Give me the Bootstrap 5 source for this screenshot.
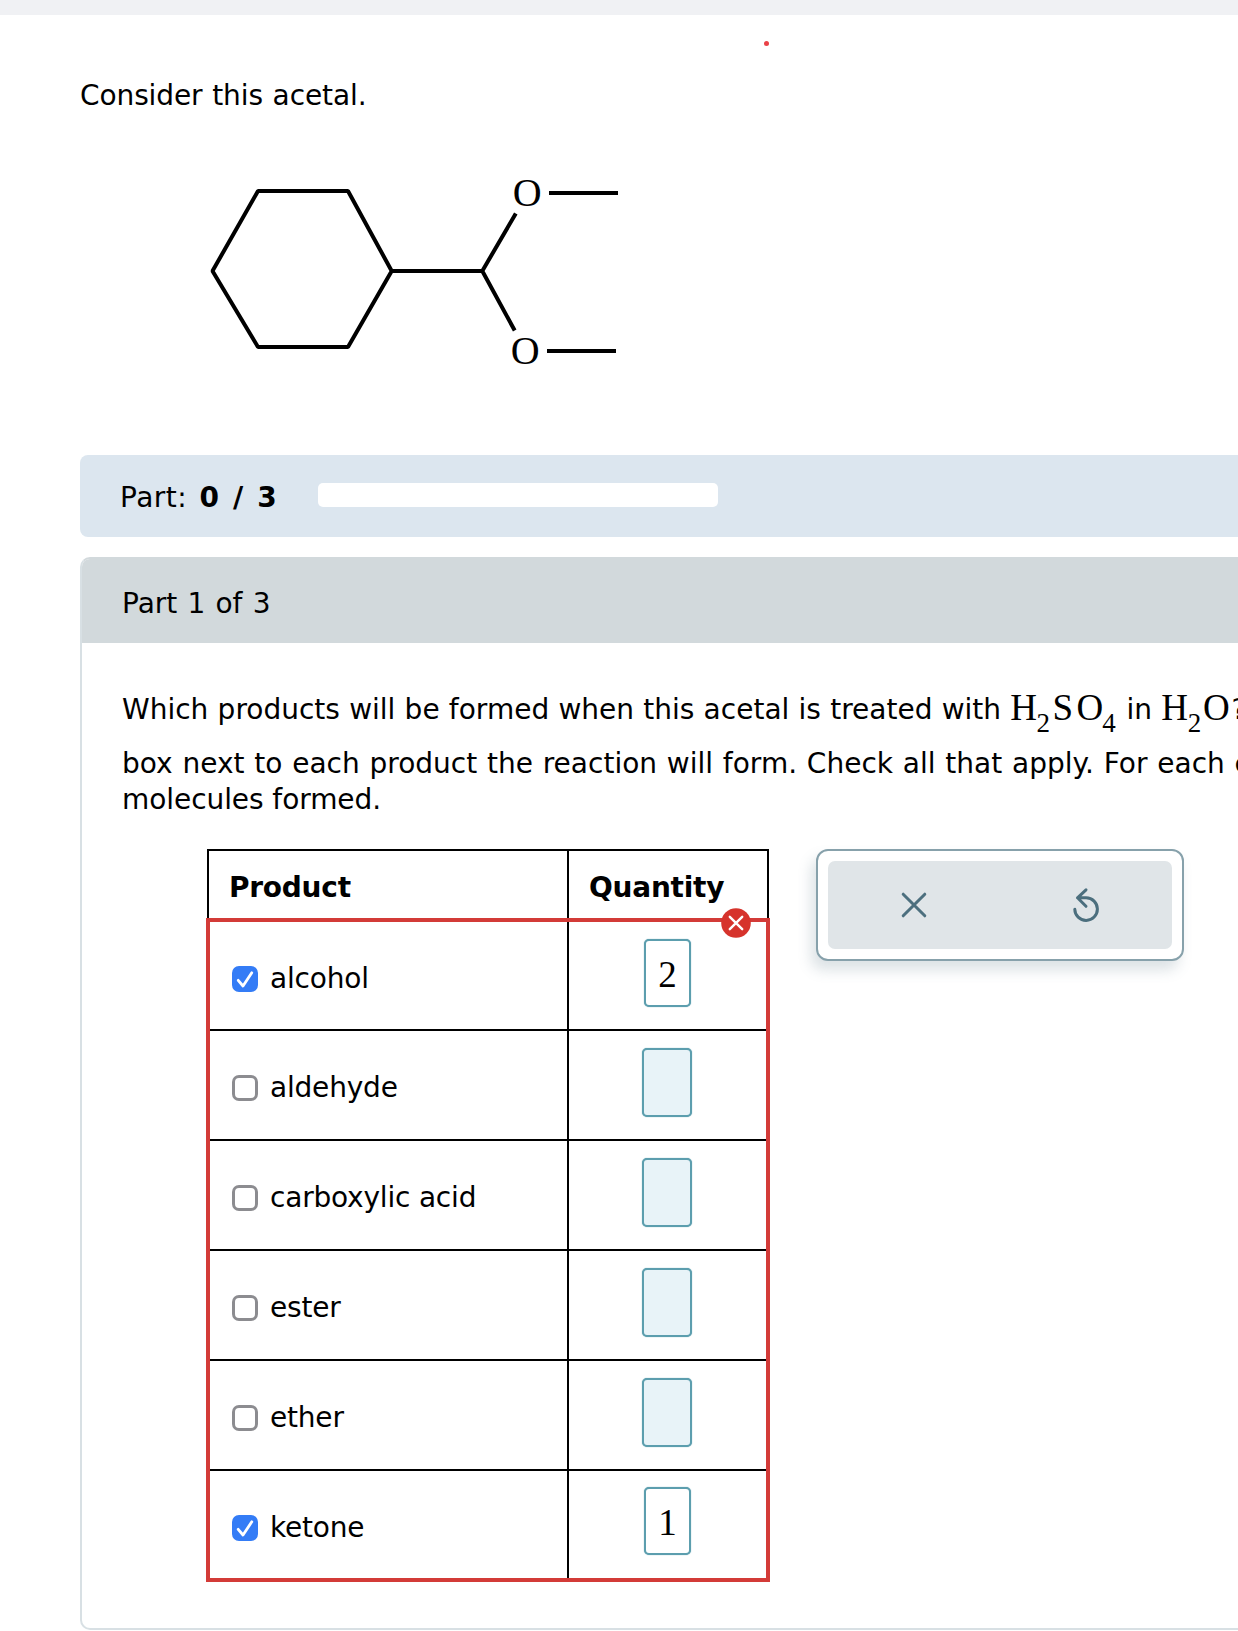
<!DOCTYPE html>
<html lang="en">
<head>
<meta charset="utf-8">
<meta name="viewport" content="width=device-width, initial-scale=1">
<title>Acetal hydrolysis</title>
<link href="https://cdn.jsdelivr.net/npm/bootstrap@5.3.0/dist/css/bootstrap.min.css" rel="stylesheet">
<style>
  body { font-family: Verdana, "DejaVu Sans", sans-serif; font-size: 28px; line-height: 36px; color: #000; background: #fff; height: 1631px; overflow: hidden; }
  .topstrip { height: 15px; background: #f0f1f4; }
  .pen-dot { width: 5px; height: 5px; background: #ea4247; left: 764px; top: 41px; }
  .intro { padding: 63px 0 0 80px; height: 98px; letter-spacing: -.1px; word-spacing: .9px; }
  .molecule { display: block; margin: 0 0 0 200px; }
  .molecule text { font-family: "Liberation Serif", serif; font-size: 40px; text-anchor: middle; }
  .part-bar { margin: 55px 0 0 80px; height: 82px; background: #dce6ef; border-radius: 8px 0 0 8px; padding-left: 40px; }
  .part-bar .progress { width: 400px; height: 24px; border-radius: 5px; background: #fff; margin-left: 40px; margin-top: -2px; }
  .part-label { width: 158px; padding-top: 3px; letter-spacing: .5px; }
  .part-label b { letter-spacing: -.4px; word-spacing: 5px; margin-left: 3px; }
  .part-card { margin: 20px 0 0 80px; height: 1073px; border: 2px solid #d8e0e4; border-top-color: #d2d9dc; border-right: 0; border-radius: 10px 0 0 10px; }
  .part-head { height: 84px; background: #d2d9dc; padding: 27px 0 0 40px; border-radius: 8px 0 0 0; word-spacing: 1.3px; }
  .question { padding: 49px 0 0 40px; height: 206px; }
  .line-a { word-spacing: .35px; margin-bottom: 18px; height: 36px; }
  .line-b { word-spacing: .9px; }
  .line-c { letter-spacing: -.07px; }
  .chem { font-family: "Liberation Serif", serif; font-size: 37px; line-height: 30px; letter-spacing: 2.4px; position: relative; top: 1px; }
  .chem i { font-style: normal; font-size: 27px; line-height: 1px; position: relative; top: 12px; margin-left: -4px; }
  .acid { letter-spacing: 3.4px; margin-right: -1px; }
  .acid i { letter-spacing: 2.6px; }
  .acid i + i { margin-left: -4.5px; }
  .water { letter-spacing: 1.6px; }
  .water i { letter-spacing: 1.9px; margin-left: -2px; }
  .work { padding-left: 125px; gap: 47px; }
  .answers { width: 562px; border-collapse: collapse; table-layout: fixed; }
  .answers th, .answers td { border: 2px solid #000; padding: 0; }
  .answers th { height: 70px; padding: 5px 0 0 20px; vertical-align: middle; letter-spacing: -.25px; }
  .answers td { height: 110px; }
  .answers .form-check-input { width: 26px; height: 26px; margin: 0; border: 3px solid #8c8c90; border-radius: 7px; background-size: 26px; }
  .answers .form-check-input:checked { background-color: #347cf6; border-color: #347cf6; background-image: none; }
  .answers label { gap: 12px; padding: 7px 0 0 23px; letter-spacing: -.2px; }
  .answers tr + tr label { padding-top: 5px; }
  .answers label > span:last-child { padding-top: 1px; }
  .tick { position: absolute; left: 0; top: 0; pointer-events: none; }
  .qty { width: 50px; height: 69px; margin: -5px 0 0 73px; border: 2px solid #5c9eae; border-radius: 5px; background: #e8f3f8; box-shadow: 0 0 1px #5c9eae; font-family: "Liberation Serif", serif; font-size: 37px; }
  .qty.filled { width: 47px; height: 68px; background: #fff; margin: -4px 0 0 75px; padding-top: 3px; }
  tr:last-child .qty.filled { margin-top: -8px; }
  .error-frame { left: -1px; right: -1px; top: 69px; bottom: -1px; border: 4px solid #d33b38; pointer-events: none; }
  .error-mark { left: 514px; top: 59px; }
  .toolpad { width: 368px; height: 112px; border: 2px solid #87a1ab; border-radius: 12px; padding: 10px; box-shadow: -5px 9px 14px rgba(80,110,125,.2); background: #fff; }
  .toolpad > div { height: 88px; background: #e0e5e8; border-radius: 7px; }
  .toolpad button { border: 0; background: none; flex: 1 1 0; padding: 0; }
</style>
</head>
<body class="position-relative">
<div class="topstrip"></div>
<span class="pen-dot position-absolute rounded-circle"></span>
<main>
  <div class="intro">Consider this acetal.</div>
  <svg class="molecule" width="430" height="287" viewBox="200 113 430 287" fill="none" stroke="#000" stroke-width="4">
    <path d="M212.5 271 258 191H348L391.7 271 348 347H258Z" stroke-linejoin="bevel"/>
    <path d="M391.7 271H482.5M515.8 213.5 482.3 271 514.7 330.5M549 193H618M547 351H616"/>
    <g fill="#000" stroke="none"><text x="527.3" y="206">O</text><text x="525.3" y="363.5">O</text></g>
  </svg>

  <section class="part-bar d-flex align-items-center">
    <div class="part-label text-nowrap">Part: <b>0 / 3</b></div>
    <div class="progress"></div>
  </section>

  <section class="part-card">
    <div class="part-head">Part 1 of 3</div>
    <div class="question text-nowrap">
      <div class="line-a">Which products will be formed when this acetal is treated with <span class="chem acid">H<i>2</i>SO<i>4</i></span> in <span class="chem water">H<i>2</i>O</span>?</div>
      <div class="line-b">box next to each product the reaction will form. Check all that apply. For each c</div>
      <div class="line-c">molecules formed.</div>
    </div>

    <div class="work d-flex align-items-start">
      <div class="position-relative">
        <table class="answers">
          <colgroup><col style="width:360px"><col style="width:200px"></colgroup>
          <thead><tr><th>Product</th><th>Quantity</th></tr></thead>
          <tbody id="rows"></tbody>
        </table>
        <div class="error-frame position-absolute"></div>
        <svg class="error-mark position-absolute" width="30" height="30" viewBox="0 0 30 30"><circle cx="15" cy="15" r="14.8" fill="#d6332c"/><path d="M8.8 8.8 21.2 21.2M21.2 8.8 8.8 21.2" stroke="#fff" stroke-width="2.4" stroke-linecap="round"/></svg>
      </div>
      <div class="toolpad">
        <div class="d-flex">
          <button type="button" aria-label="Clear"><svg width="30" height="38" viewBox="0 0 30 38" fill="none" stroke="#4c6f7e" stroke-width="3" stroke-linecap="round"><path d="M4.2 8.2 25.8 29.8M25.8 8.2 4.2 29.8"/></svg></button>
          <button type="button" aria-label="Undo"><svg width="30" height="38" viewBox="0 0 30 38" fill="none" stroke="#4c6f7e" stroke-width="3" stroke-linecap="round" stroke-linejoin="round"><path d="M3.8 23.2A11.3 11.3 0 1 0 15.1 11.8H6.5M15 3.8 6.5 11.8 15 20.3"/></svg></button>
        </div>
      </div>
    </div>
  </section>
</main>
<script>
  const products = [["alcohol", "2"], ["aldehyde", ""], ["carboxylic acid", ""], ["ester", ""], ["ether", ""], ["ketone", "1"]];
  const tick = '<svg class="tick" width="26" height="26" viewBox="0 0 26 26" fill="none" stroke="#fff" stroke-width="2.8" stroke-linecap="round" stroke-linejoin="round"><path d="M6.2 14.3 11 20 19.8 6.8"/></svg>';
  document.getElementById("rows").innerHTML = products.map(([name, n]) =>
    `<tr><td><label class="d-flex align-items-center"><span class="position-relative d-flex"><input class="form-check-input" type="checkbox" ${n ? "checked" : ""}>${n ? tick : ""}</span><span>${name}</span></label></td>
     <td><div class="qty ${n ? "filled" : ""} d-flex align-items-center justify-content-center">${n}</div></td></tr>`).join("");
</script>
<script src="https://cdn.jsdelivr.net/npm/bootstrap@5.3.0/dist/js/bootstrap.bundle.min.js"></script>
</body>
</html>
